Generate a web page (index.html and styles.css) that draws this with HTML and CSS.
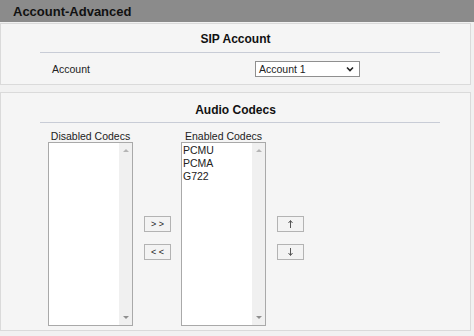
FILE: index.html
```html
<!doctype html>
<html lang="en">
  <head>
    <meta charset="UTF-8" />
    <meta name="viewport" content="width=device-width, initial-scale=1.0" />
    <title>Account-Advanced</title>
    <link rel="stylesheet" href="styles.css">
  </head>
  <body>
    <div class="page-header">Account-Advanced</div>

    <div class="panel panel-sip">
      <div class="panel-title">SIP Account</div>
      <div class="rule"></div>
      <div class="form-row">
        <label class="form-label" for="account">Account</label>
        <div class="select-box" id="account">
          <span>Account 1</span>
          <svg class="select-arrow" width="8" height="6" viewBox="0 0 8 6">
            <path d="M1 1.5 L4 4.5 L7 1.5" fill="none" stroke="#222" stroke-width="1.6" />
          </svg>
        </div>
      </div>
    </div>

    <div class="panel panel-codecs">
      <div class="panel-title">Audio Codecs</div>
      <div class="rule"></div>
      <div class="codecs">
        <div class="codec-col">
          <div class="codec-label">Disabled Codecs</div>
          <div class="listbox">
            <div class="list-items"></div>
            <div class="scrollbar">
              <span class="scroll-up"></span>
              <span class="scroll-down"></span>
            </div>
          </div>
        </div>

        <div class="btn-col">
          <button class="small-btn">&gt; &gt;</button>
          <button class="small-btn">&lt; &lt;</button>
        </div>

        <div class="codec-col">
          <div class="codec-label">Enabled Codecs</div>
          <div class="listbox">
            <div class="list-items">
              <div class="list-item">PCMU</div>
              <div class="list-item">PCMA</div>
              <div class="list-item">G722</div>
            </div>
            <div class="scrollbar">
              <span class="scroll-up"></span>
              <span class="scroll-down"></span>
            </div>
          </div>
        </div>

        <div class="btn-col">
          <button class="small-btn" aria-label="Up">
            <svg width="5" height="8" viewBox="0 0 5 8">
              <path d="M2.5 8 V1 M0.5 3 L2.5 0.5 L4.5 3" fill="none" stroke="#444" stroke-width="0.9" />
            </svg>
          </button>
          <button class="small-btn" aria-label="Down">
            <svg width="5" height="8" viewBox="0 0 5 8">
              <path d="M2.5 0 V7 M0.5 5 L2.5 7.5 L4.5 5" fill="none" stroke="#444" stroke-width="0.9" />
            </svg>
          </button>
        </div>
      </div>
    </div>
  </body>
</html>
```

FILE: styles.css
```css
body {
  margin: 0;
  background: #f1f1f1;
  font-family: "Liberation Sans", Arial, sans-serif;
  font-size: 10px;
  color: #222;
}
.page-header {
  height: 22px;
  line-height: 23px;
  padding-left: 13px;
  background: #8b8b8b;
  color: #111;
  font-size: 13px;
  font-weight: bold;
}
.panel {
  background: #f5f5f5;
  border: 1px solid #dadada;
  margin-right: 3px;
}
.panel-sip {
  margin-top: 1px;
  padding: 8px 0 7px;
}
.panel-codecs {
  margin-top: 7px;
  padding: 10px 0 4px;
}
.panel-title {
  text-align: center;
  font-size: 12px;
  font-weight: bold;
  line-height: 14px;
  color: #111;
}
.rule {
  height: 1px;
  background: #c8ccd6;
  margin: 6px 30px 0 39px;
}
.panel-codecs .rule {
  margin-top: 5px;
}
.form-row {
  display: flex;
  align-items: center;
  height: 16px;
  margin-top: 8px;
  padding-left: 51px;
}
.form-label {
  width: 203px;
  font-size: 10.5px;
}
.select-box {
  box-sizing: border-box;
  width: 105px;
  height: 16px;
  border: 1px solid #8f8f8f;
  background: white;
  display: flex;
  align-items: center;
  justify-content: space-between;
  padding: 0 5px 0 3px;
  font-size: 10.5px;
}
.select-arrow {
  display: block;
}
.codecs {
  display: flex;
  margin-top: 7px;
  padding-left: 47px;
}
.codec-col {
  width: 85px;
}
.codec-label {
  text-align: center;
  line-height: 12px;
  white-space: nowrap;
  font-size: 10.5px;
}
.listbox {
  display: flex;
  height: 182px;
  border: 1px solid #a9a9a9;
  background: white;
}
.list-items {
  flex: 1;
  padding: 1px 0 0 1px;
  font-size: 10.5px;
}
.list-item {
  line-height: 13px;
}
.scrollbar {
  width: 13px;
  background: #f0f0f0;
  display: flex;
  flex-direction: column;
  justify-content: space-between;
  align-items: center;
  padding: 6px 0;
}
.scroll-up,
.scroll-down {
  width: 0;
  height: 0;
  border-left: 3px solid transparent;
  border-right: 3px solid transparent;
}
.scroll-up {
  border-bottom: 3px solid #b5b5b5;
}
.scroll-down {
  border-top: 3px solid #8f8f8f;
}
.btn-col {
  display: flex;
  flex-direction: column;
  gap: 12px;
  margin: 86px 10px 0 11px;
}
.small-btn {
  width: 27px;
  height: 16px;
  padding: 0;
  border: 1px solid #b3b3b3;
  background: #f3f3f3;
  font-family: "Liberation Sans", Arial, sans-serif;
  font-size: 9px;
  color: #222;
  line-height: 14px;
  display: flex;
  align-items: center;
  justify-content: center;
}
```
